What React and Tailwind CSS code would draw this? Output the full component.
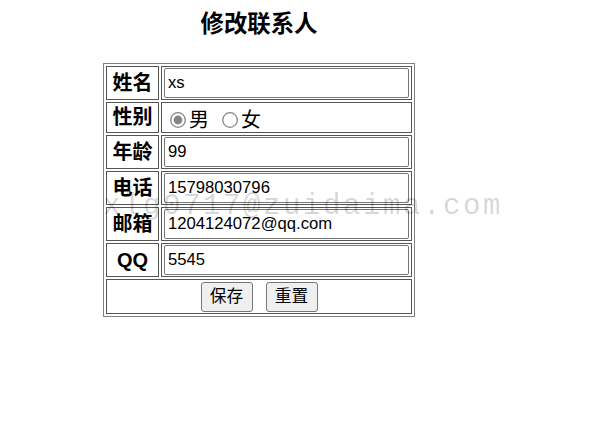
import React from "react";

function Radio({ checked }) {
  return (
    <svg width="16" height="16" viewBox="0 0 16 16" className="shrink-0">
      <circle cx="8" cy="8" r="7.3" fill="#ffffff" stroke="#858585" strokeWidth="1.3" />
      {checked && <circle cx="8" cy="8" r="4.4" fill="#858585" />}
    </svg>
  );
}

function Label({ children }) {
  return (
    <div className="border border-[#555555] flex items-center justify-center font-bold text-[20px] text-black pb-[1px]">
      {children}
    </div>
  );
}

function InputCell({ value }) {
  return (
    <div className="border border-[#555555] flex items-center px-[2px]">
      <input
        readOnly
        value={value}
        className="w-full h-[30px] border border-[#767676] rounded-[2px] px-[3px] text-[16.67px] text-black bg-white outline-none font-['Liberation_Sans',sans-serif]"
      />
    </div>
  );
}

function Btn({ children }) {
  return (
    <button className="w-[52px] h-[30px] bg-[#efefef] border border-[#767676] rounded-[3px] text-[16.67px] text-black flex items-center justify-center">
      {children}
    </button>
  );
}

export default function App() {
  return (
    <div className="relative w-[600px] h-[430px] bg-white font-['Liberation_Sans','Noto_Sans_CJK_SC',sans-serif] text-black">
      <div className="ml-[103px] pt-[9px] w-[312px]">
        <h3 className="h-[30px] leading-[30px] text-center text-[23.4px] font-bold">修改联系人</h3>
        <div className="mt-[24px] border border-[#808080] p-[2px] grid grid-cols-[53px_251px] grid-rows-[34px_31px_34px_34px_34px_34px_35px] gap-[2px]">
          <Label>姓名</Label>
          <InputCell value="xs" />
          <Label>性别</Label>
          <div className="border border-[#555555] flex items-center pl-[8px] pt-[4px] text-[20px]">
            <Radio checked />
            <span className="ml-[3px] leading-none">男</span>
            <span className="ml-[13px]"><Radio /></span>
            <span className="ml-[3px] leading-none">女</span>
          </div>
          <Label>年龄</Label>
          <InputCell value="99" />
          <Label>电话</Label>
          <InputCell value="15798030796" />
          <Label>邮箱</Label>
          <InputCell value="1204124072@qq.com" />
          <Label>QQ</Label>
          <InputCell value="5545" />
          <div className="col-span-2 border border-[#555555] flex items-center justify-center gap-[13px]">
            <Btn>保存</Btn>
            <Btn>重置</Btn>
          </div>
        </div>
      </div>
      <div className="absolute left-[103px] top-[192px] text-[29px] leading-none tracking-[2.6px] font-['Liberation_Mono',monospace] text-[rgba(0,0,0,0.17)] pointer-events-none whitespace-nowrap">
        xlg0717@zuidaima.com
      </div>
    </div>
  );
}
